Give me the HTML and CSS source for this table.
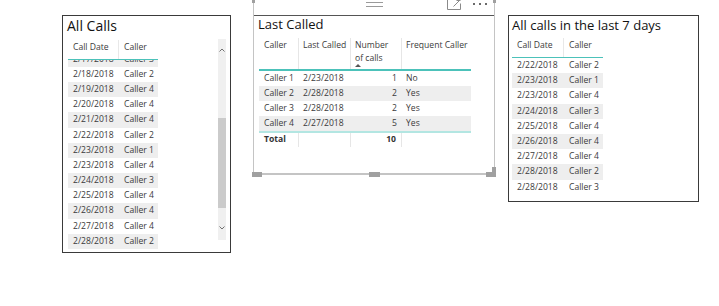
FILE: index.html
```html
<!DOCTYPE html>
<html>
<head>
<meta charset="utf-8">
<title>Calls report</title>
<link rel="stylesheet" href="styles.css">
</head>
<body>
<div class="canvas">

  <section class="visual v-all">
    <h2 class="v-title v-title-lg">All Calls</h2>
    <div class="v-content">
      <div class="tbl tbl-2 tbl-all">
        <div class="thead">
          <div class="th">Call Date</div>
          <div class="th">Caller</div>
        </div>
        <div class="tbody tbody-scroll">
          <div class="rows rows-scrolled rows-odd">
            <div class="row"><div class="td">2/17/2018</div><div class="td">Caller 3</div></div>
            <div class="row"><div class="td">2/18/2018</div><div class="td">Caller 2</div></div>
            <div class="row"><div class="td">2/19/2018</div><div class="td">Caller 4</div></div>
            <div class="row"><div class="td">2/20/2018</div><div class="td">Caller 4</div></div>
            <div class="row"><div class="td">2/21/2018</div><div class="td">Caller 4</div></div>
            <div class="row"><div class="td">2/22/2018</div><div class="td">Caller 2</div></div>
            <div class="row"><div class="td">2/23/2018</div><div class="td">Caller 1</div></div>
            <div class="row"><div class="td">2/23/2018</div><div class="td">Caller 4</div></div>
            <div class="row"><div class="td">2/24/2018</div><div class="td">Caller 3</div></div>
            <div class="row"><div class="td">2/25/2018</div><div class="td">Caller 4</div></div>
            <div class="row"><div class="td">2/26/2018</div><div class="td">Caller 4</div></div>
            <div class="row"><div class="td">2/27/2018</div><div class="td">Caller 4</div></div>
            <div class="row"><div class="td">2/28/2018</div><div class="td">Caller 2</div></div>
          </div>
        </div>
      </div>
      <div class="scrollbar">
        <div class="sb-arrow">
          <svg width="6" height="4" viewBox="0 0 6 4"><polyline points="0.5,3.5 3,1 5.5,3.5" fill="none" stroke="#707070" stroke-width="1"/></svg>
        </div>
        <div class="sb-space-top"></div>
        <div class="sb-thumb"></div>
        <div class="sb-space-bottom"></div>
        <div class="sb-arrow">
          <svg width="6" height="4" viewBox="0 0 6 4"><polyline points="0.5,0.5 3,3 5.5,0.5" fill="none" stroke="#707070" stroke-width="1"/></svg>
        </div>
      </div>
    </div>
  </section>

  <section class="visual v-last">
    <div class="v-header">
      <div></div>
      <svg class="grip" width="17" height="8" viewBox="0 0 17 8"><path d="M0 2.5H17M0 6.5H17" stroke="#9a9a9a" stroke-width="1"/></svg>
      <div class="v-icons">
        <svg class="focus-icon" width="14" height="10" viewBox="0 0 14 10"><path d="M0.5 0V9.5H13.5V3.5M6.5 6.5L13 0M9.5 0.5H13.5" fill="none" stroke="#8a8a8a" stroke-width="1"/></svg>
        <div class="dots"><span></span><span></span><span></span></div>
      </div>
    </div>
    <h2 class="v-title v-title-last">Last Called</h2>
    <div class="tbl tbl-4">
      <div class="thead thead-4">
        <div class="th">Caller</div>
        <div class="th">Last Called</div>
        <div class="th">Number<br>of calls<span class="sort-up"></span></div>
        <div class="th">Frequent Caller</div>
      </div>
      <div class="rows rows-even">
        <div class="row row-4"><div class="td">Caller 1</div><div class="td">2/23/2018</div><div class="td num">1</div><div class="td">No</div></div>
        <div class="row row-4"><div class="td">Caller 2</div><div class="td">2/28/2018</div><div class="td num">2</div><div class="td">Yes</div></div>
        <div class="row row-4"><div class="td">Caller 3</div><div class="td">2/28/2018</div><div class="td num">2</div><div class="td">Yes</div></div>
        <div class="row row-4"><div class="td">Caller 4</div><div class="td">2/27/2018</div><div class="td num">5</div><div class="td">Yes</div></div>
      </div>
      <div class="total-row">
        <div class="tt">Total</div><div class="tt"></div><div class="tt num">10</div><div class="tt"></div>
      </div>
    </div>
    <span class="handle h-tl"></span>
    <span class="handle h-tr"></span>
    <span class="handle h-bl"></span>
    <span class="handle h-bc"></span>
    <span class="handle h-br-h"></span>
    <span class="handle h-br-v"></span>
  </section>

  <section class="visual v-week">
    <h2 class="v-title">All calls in the last 7 days</h2>
    <div class="tbl tbl-2 tbl-week">
      <div class="thead">
        <div class="th">Call Date</div>
        <div class="th">Caller</div>
      </div>
      <div class="rows rows-even">
        <div class="row"><div class="td">2/22/2018</div><div class="td">Caller 2</div></div>
        <div class="row"><div class="td">2/23/2018</div><div class="td">Caller 1</div></div>
        <div class="row"><div class="td">2/23/2018</div><div class="td">Caller 4</div></div>
        <div class="row"><div class="td">2/24/2018</div><div class="td">Caller 3</div></div>
        <div class="row"><div class="td">2/25/2018</div><div class="td">Caller 4</div></div>
        <div class="row"><div class="td">2/26/2018</div><div class="td">Caller 4</div></div>
        <div class="row"><div class="td">2/27/2018</div><div class="td">Caller 4</div></div>
        <div class="row"><div class="td">2/28/2018</div><div class="td">Caller 2</div></div>
        <div class="row"><div class="td">2/28/2018</div><div class="td">Caller 3</div></div>
      </div>
    </div>
  </section>

</div>
</body>
</html>
```

FILE: styles.css
```css
* { box-sizing: border-box; }

body {
  margin: 0;
  background: #ffffff;
  font-family: "Open Sans", "Noto Sans", sans-serif;
  color: #3b3b3b;
}

.canvas {
  display: flex;
  align-items: flex-start;
  width: 719px;
  height: 306px;
  overflow: hidden;
}

.visual {
  display: flex;
  flex-direction: column;
  flex: none;
}

.v-title {
  margin: 0;
  font-weight: 400;
  font-size: 13px;
  line-height: 18px;
  color: #111111;
  white-space: nowrap;
}

.v-title-lg {
  font-size: 14px;
  line-height: 19px;
}

/* ---------- All Calls ---------- */
.v-all {
  margin: 15px 0 0 62px;
  width: 169px;
  height: 238px;
  border: 1px solid #3a3a3a;
  padding: 0 4px;
}

.v-content {
  display: flex;
  align-items: flex-start;
}

.tbl-2 .thead,
.tbl-2 .row {
  display: grid;
  grid-template-columns: 51px 39px;
}

.tbl-all {
  width: 90px;
  margin: 5px 0 0 1px;
}

.thead {
  height: 20px;
  border-bottom: 1px solid #4cc2ba;
}

.th {
  font-size: 8.6px;
  line-height: 12px;
  padding: 1px 0 0 5px;
  color: #3b3b3b;
  white-space: nowrap;
}

.tbl-2 .th:first-child {
  border-right: 1px solid #e8e8e8;
}

.tbody-scroll {
  height: 190px;
  overflow: hidden;
}

.rows-scrolled {
  margin-top: -8.4px;
}

.row {
  height: 15.2px;
  line-height: 15.2px;
  font-size: 8.6px;
  color: #3b3b3b;
  white-space: nowrap;
}

.rows-odd .row:nth-child(odd),
.rows-even .row:nth-child(even) {
  background: #eeeeee;
}

.td {
  padding-left: 5px;
}

.scrollbar {
  margin: 4px 0 0 auto;
  width: 8px;
  height: 201px;
  background: #f0f0f0;
  display: flex;
  flex-direction: column;
}

.sb-arrow {
  height: 22px;
  display: flex;
  align-items: center;
  justify-content: center;
}

.sb-arrow svg { display: block; }

.sb-space-top { height: 57px; }
.sb-thumb { height: 90px; background: #cbcbcb; }
.sb-space-bottom { height: 9px; }

/* ---------- Last Called ---------- */
.v-last {
  position: relative;
  margin-left: 22px;
  width: 242px;
  height: 175px;
  border-left: 1px solid #c4c4c4;
  border-right: 1px solid #c4c4c4;
  border-bottom: 2px solid #c4c4c4;
}

.v-header {
  height: 16px;
  border-bottom: 1px solid #555555;
  display: grid;
  grid-template-columns: 1fr auto 1fr;
  align-items: start;
}

.grip {
  display: block;
  margin-top: 0;
}

.v-icons {
  display: flex;
  justify-content: flex-end;
  align-items: flex-start;
  gap: 12px;
  padding-right: 7px;
}

.focus-icon { display: block; }

.dots {
  display: flex;
  gap: 4px;
  margin-top: 3px;
}

.dots span {
  width: 2px;
  height: 2px;
  background: #6a6a6a;
}

.v-title-last {
  padding-left: 4px;
  line-height: 17px;
}

.tbl-4 {
  width: 212px;
  margin: 5px 0 0 5px;
}

.thead-4,
.row-4,
.total-row {
  display: grid;
  grid-template-columns: 40px 52px 51px 69px;
}

.thead-4 {
  height: 33px;
  border-bottom: 2px solid #4cc2ba;
}

.thead-4 .th {
  line-height: 13px;
  padding: 1px 0 0 4px;
  border-right: 1px solid #e6e6e6;
}

.thead-4 .th:first-child { padding-left: 5px; }
.thead-4 .th:last-child { border-right: 0; }

.sort-up {
  display: block;
  width: 0;
  height: 0;
  margin-top: -1px;
  border-left: 3px solid transparent;
  border-right: 3px solid transparent;
  border-bottom: 3px solid #555555;
}

.row-4 {
  height: 14.9px;
  line-height: 14.9px;
}

.row-4 .td { padding-left: 4px; }
.row-4 .td:first-child { padding-left: 5px; }

.num {
  text-align: right;
  padding-right: 5px;
}

.row-4 .td.num { padding-left: 0; }

.total-row {
  height: 16px;
  border-top: 2px solid #b3e6e2;
  font-size: 8.6px;
  line-height: 13px;
  font-weight: 700;
  color: #333333;
}

.tt {
  padding-left: 5px;
  border-right: 1px solid #e6e6e6;
}

.tt:last-child { border-right: 0; }
.tt.num { padding-left: 0; }

.handle {
  position: absolute;
  background: #a0a0a0;
}

.h-tl { left: -2px; top: 0; width: 3px; height: 3px; }
.h-tr { right: -2px; top: 0; width: 3px; height: 3px; }
.h-bl { left: -2px; bottom: -4px; width: 10px; height: 5px; }
.h-bc { left: 115px; bottom: -4px; width: 11px; height: 5px; }
.h-br-h { right: -2px; bottom: -4px; width: 10px; height: 5px; }
.h-br-v { right: -2px; bottom: -4px; width: 4px; height: 10px; }

/* ---------- Last 7 days ---------- */
.v-week {
  margin: 15px 0 0 13px;
  width: 191px;
  height: 187px;
  border: 1px solid #3a3a3a;
  padding: 0 3px;
}

.tbl-week {
  width: 91px;
  margin-top: 4px;
}

.tbl-week .thead,
.tbl-week .row {
  grid-template-columns: 52px 39px;
}
```
